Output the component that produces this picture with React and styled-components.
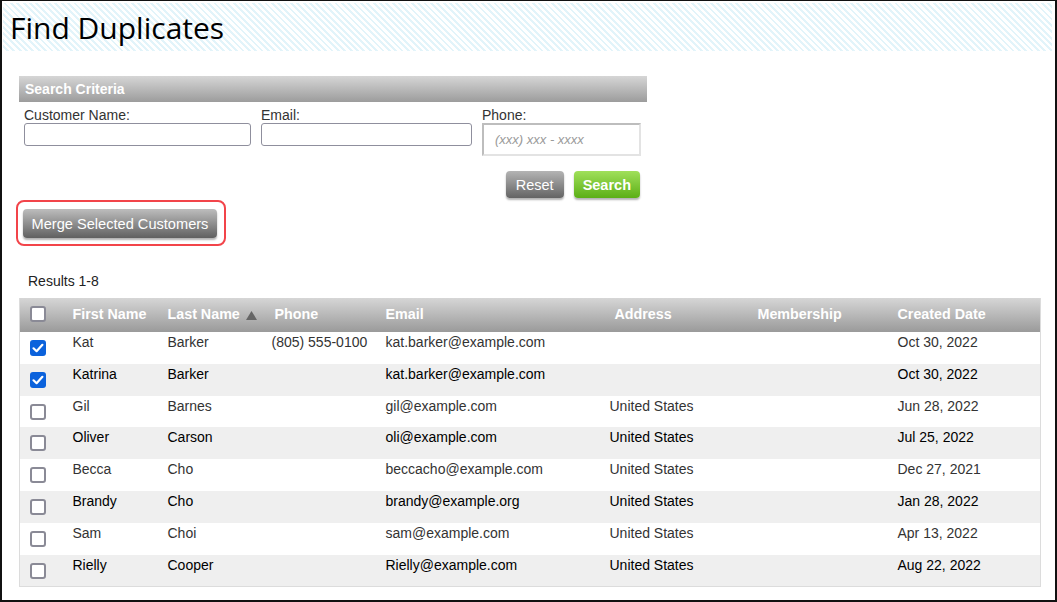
import React from "react";
import styled, { createGlobalStyle } from "styled-components";

const GlobalStyle = createGlobalStyle`
  html, body {
    margin: 0;
    padding: 0;
    background: #fff;
  }
  body {
    font-family: "Liberation Sans", Arial, sans-serif;
    font-size: 14px;
    color: #333;
  }
  * {
    box-sizing: border-box;
  }
`;

const Frame = styled.div`
  width: 1057px;
  height: 602px;
  border: 2px solid #111;
  border-top-width: 1px;
  overflow: hidden;
  background: #fff;
`;

const PageHeader = styled.header`
  height: 48px;
  margin: 2px 3px 0 1px;
  padding-left: 7px;
  display: flex;
  align-items: center;
  background: repeating-linear-gradient(
    45deg,
    #fff 0px,
    #fff 2.5px,
    #e2f4fa 2.5px,
    #e2f4fa 4.5px
  );
  h1 {
    margin: 0;
    font-family: "Open Sans", "Noto Sans", sans-serif;
    font-weight: 400;
    font-size: 30px;
    color: #000;
  }
`;

const Content = styled.main`
  padding: 25px 0 0 17px;
`;

const SearchPanel = styled.section`
  width: 628px;
`;

const PanelTitle = styled.div`
  height: 26px;
  padding-left: 6px;
  display: flex;
  align-items: center;
  background: linear-gradient(#d6d6d6, #9c9c9c);
  color: #fff;
  font-weight: bold;
  font-size: 14px;
`;

const FieldRow = styled.div`
  display: flex;
  gap: 10px;
  padding: 5px 0 0 5px;
`;

const Field = styled.label`
  display: flex;
  flex-direction: column;
  width: ${(p) => p.$width}px;
  color: #333;
  font-size: 14px;
  line-height: 16px;
`;

const TextInput = styled.input`
  height: 23px;
  border: 1px solid #8f8f9d;
  border-radius: 3px;
  font: inherit;
  padding: 0 6px;
`;

const PhoneInput = styled.input`
  height: 33px;
  border-style: solid;
  border-width: 2px;
  border-color: #bdbdbd #e3e3e3 #e3e3e3 #bdbdbd;
  font-family: "Liberation Sans", Arial, sans-serif;
  font-size: 13px;
  padding: 0 11px;
  &::placeholder {
    color: #9a9a9a;
    font-style: italic;
  }
`;

const ButtonRow = styled.div`
  display: flex;
  justify-content: flex-end;
  gap: 10px;
  padding: 15px 7px 0 0;
`;

const Button = styled.button`
  height: 27px;
  padding: 0 ${(p) => (p.$pad ? p.$pad : 8)}px;
  border: none;
  border-radius: 4px;
  font-family: "Liberation Sans", Arial, sans-serif;
  font-size: 14.5px;
  color: #fff;
  cursor: pointer;
  background: linear-gradient(#b4b4b4, #646464);
  box-shadow: 0 2px 2px rgba(0, 0, 0, 0.3);
`;

const SearchButton = styled(Button)`
  font-weight: bold;
  background: linear-gradient(#a0e05a, #5caf16);
`;

const Highlight = styled.div`
  display: inline-block;
  margin: 2px 0 0 -3px;
  padding: 7px 7px 6px 5px;
  border: 2px solid #f2444a;
  border-radius: 8px;
`;

const MergeButton = styled(Button)`
  height: 29px;
  width: 194px;
  padding: 0;
  font-size: 14.6px;
  background: linear-gradient(#bdbdbd, #606060);
`;

const ResultsLabel = styled.div`
  margin: 27px 0 0 9px;
  height: 16px;
  line-height: 16px;
  color: #222;
`;

const Table = styled.table`
  margin-top: 9px;
  width: 1021px;
  table-layout: fixed;
  border-collapse: collapse;
  border: 1px solid #dcdcdc;
  border-top: none;
`;

const HeadRow = styled.tr`
  height: 34px;
  background: linear-gradient(#d6d6d6, #9a9a9a);
`;

const HeadCell = styled.th`
  padding: 0 0 2px ${(p) => 10 + (p.$shift || 0)}px;
  text-align: left;
  color: #fff;
  font-weight: bold;
  font-size: 14.3px;
  white-space: nowrap;
  vertical-align: middle;
`;

const Row = styled.tr`
  height: 31.8px;
  background: ${(p) => (p.$alt ? "#efefef" : "#fff")};
  color: ${(p) => (p.$alt ? "#000" : "#333")};
`;

const Cell = styled.td`
  padding: 2px 10px 0;
  vertical-align: top;
  line-height: 16px;
  white-space: nowrap;
`;

const BoxCell = styled.td`
  padding: 8px 0 0 10px;
  vertical-align: top;
`;

const Box = styled.span`
  display: block;
  width: 16px;
  height: 16px;
  border-radius: 3px;
  border: ${(p) => (p.$checked ? "none" : "2px solid #8a8a96")};
  background: ${(p) => (p.$checked ? "#0b62dc" : "#fff")};
  svg {
    display: block;
  }
`;

const SortArrow = styled.svg`
  margin-left: 6px;
  vertical-align: -1px;
`;

const Checkbox = ({ checked }) => (
  <Box $checked={checked}>
    {checked && (
      <svg width="16" height="16" viewBox="0 0 16 16">
        <path
          d="M3.5 8.3 L6.6 11.2 L12.4 4.8"
          fill="none"
          stroke="#fff"
          strokeWidth="2.2"
          strokeLinecap="round"
          strokeLinejoin="round"
        />
      </svg>
    )}
  </Box>
);

const customers = [
  { first: "Kat", last: "Barker", phone: "(805) 555-0100", email: "kat.barker@example.com", address: "", created: "Oct 30, 2022", checked: true },
  { first: "Katrina", last: "Barker", phone: "", email: "kat.barker@example.com", address: "", created: "Oct 30, 2022", checked: true },
  { first: "Gil", last: "Barnes", phone: "", email: "gil@example.com", address: "United States", created: "Jun 28, 2022" },
  { first: "Oliver", last: "Carson", phone: "", email: "oli@example.com", address: "United States", created: "Jul 25, 2022" },
  { first: "Becca", last: "Cho", phone: "", email: "beccacho@example.com", address: "United States", created: "Dec 27, 2021" },
  { first: "Brandy", last: "Cho", phone: "", email: "brandy@example.org", address: "United States", created: "Jan 28, 2022" },
  { first: "Sam", last: "Choi", phone: "", email: "sam@example.com", address: "United States", created: "Apr 13, 2022" },
  { first: "Rielly", last: "Cooper", phone: "", email: "Rielly@example.com", address: "United States", created: "Aug 22, 2022" },
];

const colWidths = [43, 95, 104, 114, 224, 148, 140, 153];

export default function App() {
  return (
    <>
      <GlobalStyle />
      <Frame>
        <PageHeader>
          <h1>Find Duplicates</h1>
        </PageHeader>
        <Content>
          <SearchPanel>
            <PanelTitle>Search Criteria</PanelTitle>
            <FieldRow>
              <Field $width={227}>
                Customer Name:
                <TextInput type="text" />
              </Field>
              <Field $width={211}>
                Email:
                <TextInput type="text" />
              </Field>
              <Field $width={159}>
                Phone:
                <PhoneInput type="text" placeholder="(xxx) xxx - xxxx" />
              </Field>
            </FieldRow>
            <ButtonRow>
              <Button $pad={10}>Reset</Button>
              <SearchButton $pad={9}>Search</SearchButton>
            </ButtonRow>
          </SearchPanel>

          <Highlight>
            <MergeButton>Merge Selected Customers</MergeButton>
          </Highlight>

          <ResultsLabel>Results 1-8</ResultsLabel>

          <Table>
            <colgroup>
              {colWidths.map((w, i) => (
                <col key={i} style={{ width: w }} />
              ))}
            </colgroup>
            <thead>
              <HeadRow>
                <HeadCell>
                  <Checkbox checked={false} />
                </HeadCell>
                <HeadCell>First Name</HeadCell>
                <HeadCell>
                  Last Name
                  <SortArrow width="11" height="9" viewBox="0 0 11 9">
                    <polygon points="5.5,0 11,9 0,9" fill="#666" />
                  </SortArrow>
                </HeadCell>
                <HeadCell $shift={3}>Phone</HeadCell>
                <HeadCell>Email</HeadCell>
                <HeadCell $shift={5}>Address</HeadCell>
                <HeadCell>Membership</HeadCell>
                <HeadCell>Created Date</HeadCell>
              </HeadRow>
            </thead>
            <tbody>
              {customers.map((c, i) => (
                <Row key={i} $alt={i % 2 === 1}>
                  <BoxCell>
                    <Checkbox checked={!!c.checked} />
                  </BoxCell>
                  <Cell>{c.first}</Cell>
                  <Cell>{c.last}</Cell>
                  <Cell>{c.phone}</Cell>
                  <Cell>{c.email}</Cell>
                  <Cell>{c.address}</Cell>
                  <Cell></Cell>
                  <Cell>{c.created}</Cell>
                </Row>
              ))}
            </tbody>
          </Table>
        </Content>
      </Frame>
    </>
  );
}
